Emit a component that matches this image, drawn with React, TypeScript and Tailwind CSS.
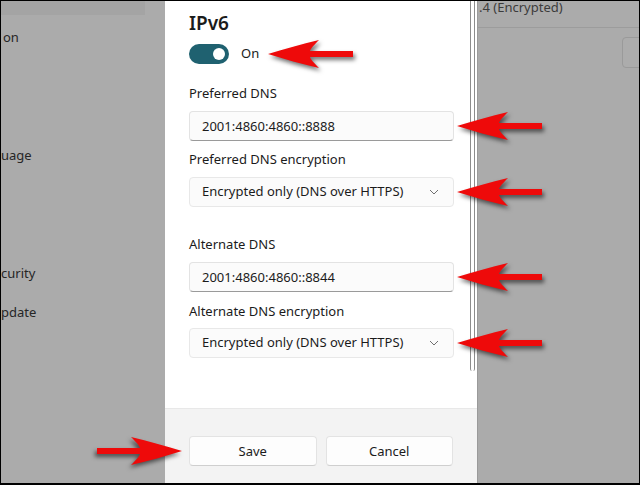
import React from "react";

const font = { fontFamily: '"Segoe UI", "Noto Sans", "Open Sans", sans-serif' };

function Arrow({ dir = "left", className = "" }: { dir?: "left" | "right"; className?: string }) {
  return (
    <svg
      width="88"
      height="28"
      viewBox="0 0 88 28"
      className={className}
      style={{ filter: "drop-shadow(2px 3px 2px rgba(0,0,0,0.55))", transform: dir === "right" ? "scaleX(-1)" : undefined }}
    >
      <path
        d="M1 14 C 18 9, 34 4, 52 0 C 47 5, 44 8, 43 11 L 86 11 L 86 17 L 43 17 C 44 20, 47 23, 52 28 C 34 24, 18 19, 1 14 Z"
        fill="#ee0a0a"
      />
    </svg>
  );
}

function Label({ children, className = "" }: { children: React.ReactNode; className?: string }) {
  return <div className={`h-[20px] text-[13px] leading-[20px] text-[#1b1b1b] ${className}`}>{children}</div>;
}

function Field({ value, className = "" }: { value: string; className?: string }) {
  return (
    <div
      className={`h-[30px] w-[265px] rounded-[4px] border border-[#e3e3e3] border-b-[#9a9a9a] bg-[#fbfbfb] pl-[12px] text-[13px] leading-[28px] text-[#1b1b1b] ${className}`}
    >
      {value}
    </div>
  );
}

function Select({ value, className = "" }: { value: string; className?: string }) {
  return (
    <div
      className={`flex h-[30px] w-[265px] items-center justify-between rounded-[4px] border border-[#e8e8e8] bg-[#fbfbfb] pl-[12px] pr-[14px] text-[13px] text-[#1b1b1b] ${className}`}
    >
      <span>{value}</span>
      <svg width="10" height="6" viewBox="0 0 10 6">
        <path d="M1 1 L5 5 L9 1" stroke="#707070" strokeWidth="1" fill="none" />
      </svg>
    </div>
  );
}

export default function App() {
  const navRows = ["on", "", "", "uage", "", "", "curity", "pdate"];
  return (
    <div className="relative h-[485px] w-[640px] overflow-hidden border-l border-r border-t border-b-2 border-black bg-[#ababab]" style={font}>
      <div className="flex h-full">
        {/* Left pane */}
        <div className="w-[164px] shrink-0 overflow-hidden">
          <div className="relative h-[14px] w-[144px] overflow-hidden bg-[#a4a4a4]">
            <div className="absolute left-[8px] top-[-16px] text-[13px] leading-[20px] text-[#2a2a2a]">nternet</div>
          </div>
          <div className="mt-[3px] flex flex-col">
            {navRows.map((t, i) => (
              <div key={i} className="flex h-[39.3px] items-center text-[13px] text-[#262626]">
                <span className={t === "on" ? "pl-[2px]" : ""}>{t}</span>
              </div>
            ))}
          </div>
        </div>

        {/* Dialog */}
        <div className="relative flex w-[313px] shrink-0 flex-col border-r border-[#9a9a9a] bg-white">
          <div className="absolute right-[2px] top-0 h-[370px] w-[5px] rounded-b-[2px] border-x border-[#8c8c8c] bg-white" />
          <div className="flex-1 pl-[24px] pt-[8px]">
            <div className="h-[28px] text-[19px] font-semibold leading-[28px] text-[#1b1b1b]">IPv6</div>
            <div className="mt-[7px] flex h-[20px] items-center">
              <div className="flex h-[20px] w-[40px] items-center justify-end rounded-full bg-[#1f6170] pr-[4px]">
                <div className="h-[12px] w-[12px] rounded-full bg-white" />
              </div>
              <span className="ml-[12px] text-[13px] text-[#1b1b1b]">On</span>
            </div>
            <Label className="mt-[19px]">Preferred DNS</Label>
            <Field value="2001:4860:4860::8888" className="mt-[8px]" />
            <Label className="mt-[8px]">Preferred DNS encryption</Label>
            <Select value="Encrypted only (DNS over HTTPS)" className="mt-[8px]" />
            <Label className="mt-[27px]">Alternate DNS</Label>
            <Field value="2001:4860:4860::8844" className="mt-[8px]" />
            <Label className="mt-[9px]">Alternate DNS encryption</Label>
            <Select value="Encrypted only (DNS over HTTPS)" className="mt-[7px]" />
          </div>
          <div className="flex h-[75px] gap-[9px] border-t border-[#e8e8e8] bg-[#f3f3f3] px-[24px] pt-[27px]">
            <div className="h-[30px] w-[128px] rounded-[4px] border border-[#e3e3e3] border-b-[#cfcfcf] bg-[#fdfdfd] text-center text-[13px] leading-[28px] text-[#1b1b1b]">
              Save
            </div>
            <div className="h-[30px] w-[128px] rounded-[4px] border border-[#e3e3e3] border-b-[#cfcfcf] bg-[#fdfdfd] text-center text-[13px] leading-[28px] text-[#1b1b1b]">
              Cancel
            </div>
          </div>
        </div>

        {/* Right pane */}
        <div className="flex-1 overflow-hidden">
          <div className="h-[27px] overflow-hidden border-b border-[#9c9c9c] pl-[1px]">
            <div className="mt-[-4px] text-[13px] leading-[20px] text-[#3c3c3c]">.4 (Encrypted)</div>
          </div>
          <div className="ml-[144px] mt-[9px] h-[31px] w-[40px] rounded-[4px] border border-[#9a9a9a] bg-[#acacac]" />
        </div>
      </div>

      {/* Arrows */}
      <Arrow className="absolute left-[266px] top-[39px]" />
      <Arrow className="absolute left-[455px] top-[111px]" />
      <Arrow className="absolute left-[455px] top-[177px]" />
      <Arrow className="absolute left-[455px] top-[262px]" />
      <Arrow className="absolute left-[455px] top-[328px]" />
      <Arrow dir="right" className="absolute left-[94px] top-[436px]" />
    </div>
  );
}
